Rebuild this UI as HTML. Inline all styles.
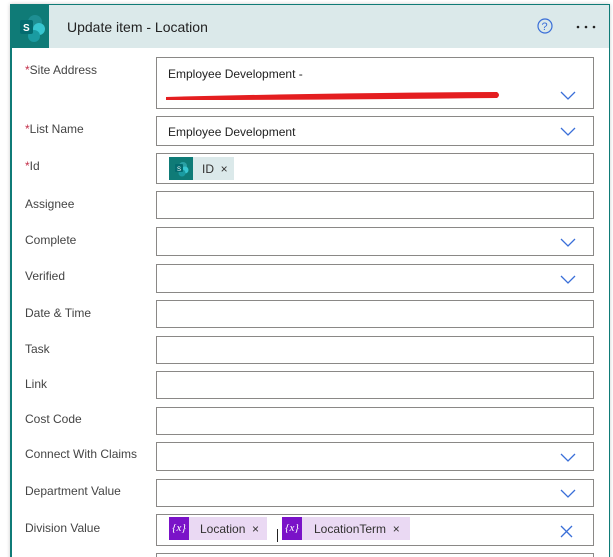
<!DOCTYPE html>
<html><head><style>
html,body{margin:0;width:613px;height:557px;overflow:hidden}
body{background:#fff;font-family:"Liberation Sans",sans-serif;font-size:12px;color:#323130;position:relative}
.card{position:absolute;left:10px;top:4px;width:597px;height:570px;border:1px solid #0f7b77;border-left:2px solid #0f7b77;box-shadow:0 0 4px rgba(0,0,0,.2)}
.hdr{position:absolute;left:0;top:0;right:0;height:43px;background:#dbe9ea}
.ico{position:absolute;left:0;top:0;width:37px;height:43px;background:#0f7b77}
.title{position:absolute;left:55px;top:14px;font-size:14px;color:#222}
.lbl{position:absolute;left:25px;font-size:12px;color:#444}
.lbl b{color:#c4314b;font-weight:normal}
.box{position:absolute;left:156px;width:436px;border:1px solid #8a8886;background:#fff}
.chev{position:absolute;right:17px}
.txt{position:absolute;left:11px;font-size:12px;color:#222}
.tok{position:absolute;top:5px;height:23px;display:flex;align-items:center;font-size:12px}
.tok i{display:block;width:20px;height:23px;color:#fff;font-style:italic;font-family:"Liberation Serif",serif;font-size:11px;text-align:center;line-height:22px}
</style></head><body>
<div class="card">
<div class="hdr"><div class="ico">
<svg width="37" height="43"><circle cx="23" cy="17" r="7" fill="#1e8f93"/><circle cx="27" cy="24" r="6" fill="#37c6d0"/><circle cx="22" cy="31" r="6" fill="#1a9ba1"/><rect x="8" y="15" width="13" height="14" rx="2" fill="#036c70"/><text x="11" y="26" font-size="10" fill="#fff" font-weight="bold" font-family="Liberation Sans">S</text></svg>
</div><div class="title">Update item - Location</div>
<svg style="position:absolute;left:525px;top:13px" width="16" height="16"><circle cx="8" cy="8" r="7" fill="none" stroke="#3a6fd8" stroke-width="1.2"/><text x="4.5" y="12" font-size="11" fill="#3a6fd8" font-family="Liberation Sans">?</text></svg>
<svg style="position:absolute;left:564px;top:20px" width="22" height="4"><circle cx="2" cy="2" r="1.3" fill="#222"/><circle cx="10" cy="2" r="1.3" fill="#222"/><circle cx="18" cy="2" r="1.3" fill="#222"/></svg>
</div></div>

<div class="lbl" style="top:63px"><b>*</b>Site Address</div>
<div class="box" style="top:57px;height:50px"><div class="txt" style="top:9px">Employee Development -</div>
<svg style="position:absolute;left:6px;top:30px" width="340" height="14"><path d="M3 9 Q150 5 334 4 Q338 7 334 10 Q150 12 3 12Z" fill="#e41e20"/></svg>
<svg class="chev" style="top:33px" width="16" height="9"><path d="M1 1 L8 8 L15 1" fill="none" stroke="#3a6fd8" stroke-width="1.3"/></svg></div>
<div class="lbl" style="top:122px"><b>*</b>List Name</div>
<div class="box" style="top:116px;height:28px"><div class="txt" style="top:8px">Employee Development</div><svg class="chev" style="top:10px" width="16" height="9"><path d="M1 1 L8 8 L15 1" fill="none" stroke="#3a6fd8" stroke-width="1.3"/></svg></div>
<div class="lbl" style="top:159px"><b>*</b>Id</div>
<div class="box" style="top:153px;height:29px"><div class="tok" style="left:12px;background:#dbe9ea;height:23px;top:3px"><i style="background:#0f7b77;width:24px"><svg width="24" height="23"><circle cx="14" cy="9" r="4" fill="#2aa0a4"/><circle cx="16" cy="13" r="3.5" fill="#37c6d0"/><circle cx="13" cy="16" r="3.5" fill="#1a9ba1"/><rect x="6" y="7" width="8" height="8" rx="1" fill="#036c70"/><text x="8" y="14" font-size="6" fill="#fff" font-style="normal" font-family="Liberation Sans">S</text></svg></i><span style="padding:0 6px 0 9px">ID &nbsp;×</span></div></div>

<div class="lbl" style="top:197px">Assignee</div><div class="box" style="top:191px;height:26px"></div>
<div class="lbl" style="top:233px">Complete</div><div class="box" style="top:227px;height:27px"><svg class="chev" style="top:10px" width="16" height="9"><path d="M1 1 L8 8 L15 1" fill="none" stroke="#3a6fd8" stroke-width="1.3"/></svg></div>
<div class="lbl" style="top:269px">Verified</div><div class="box" style="top:264px;height:27px"><svg class="chev" style="top:10px" width="16" height="9"><path d="M1 1 L8 8 L15 1" fill="none" stroke="#3a6fd8" stroke-width="1.3"/></svg></div>
<div class="lbl" style="top:306px">Date &amp; Time</div><div class="box" style="top:300px;height:26px"></div>
<div class="lbl" style="top:342px">Task</div><div class="box" style="top:336px;height:26px"></div>
<div class="lbl" style="top:377px">Link</div><div class="box" style="top:371px;height:26px"></div>
<div class="lbl" style="top:412px">Cost Code</div><div class="box" style="top:407px;height:26px"></div>
<div class="lbl" style="top:447px">Connect With Claims</div><div class="box" style="top:442px;height:27px"><svg class="chev" style="top:10px" width="16" height="9"><path d="M1 1 L8 8 L15 1" fill="none" stroke="#3a6fd8" stroke-width="1.3"/></svg></div>
<div class="lbl" style="top:484px">Department Value</div><div class="box" style="top:479px;height:26px"><svg class="chev" style="top:9px" width="16" height="9"><path d="M1 1 L8 8 L15 1" fill="none" stroke="#3a6fd8" stroke-width="1.3"/></svg></div>
<div class="lbl" style="top:521px">Division Value</div>
<div class="box" style="top:514px;height:30px">
<div class="tok" style="left:12px;top:2px;background:#ead9f3"><i style="background:#7a12c8">{x}</i><span style="padding:0 8px 0 11px">Location &nbsp;×</span></div>
<div style="position:absolute;left:120px;top:14px;width:1px;height:13px;background:#222"></div>
<div class="tok" style="left:125px;top:2px;background:#ead9f3"><i style="background:#7a12c8">{x}</i><span style="padding:0 10px 0 12px">LocationTerm &nbsp;×</span></div>
<svg style="position:absolute;right:20px;top:10px" width="13" height="13"><path d="M1 1L12 12M12 1L1 12" stroke="#3a6fd8" stroke-width="1.3"/></svg>
</div>
<div class="box" style="top:553px;height:20px"></div>
</body></html>
